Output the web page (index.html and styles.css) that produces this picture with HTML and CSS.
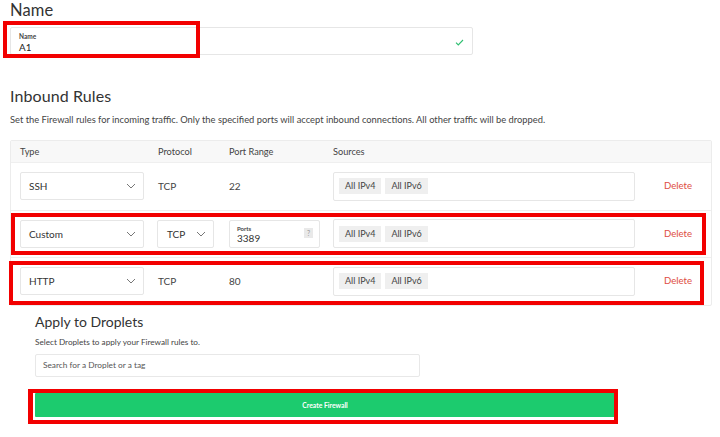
FILE: index.html
```html
<!DOCTYPE html>
<html>
<head>
<meta charset="utf-8">
<link rel="stylesheet" href="styles.css">
</head>
<body>
<div class="page">
  <h2 class="title">Name</h2>
  <div class="name-field">
    <div class="field-label">Name</div>
    <div class="field-value">A1</div>
    <svg class="check" width="9" height="7" viewBox="0 0 9 7"><path d="M1 3.6 L3.3 6 L8 1" fill="none" stroke="#2fbf71" stroke-width="1.1"/></svg>
    <div class="mark mark-name"></div>
  </div>

  <h2 class="title title-rules">Inbound Rules</h2>
  <p class="desc">Set the Firewall rules for incoming traffic. Only the specified ports will accept inbound connections. All other traffic will be dropped.</p>

  <div class="rules">
    <div class="row head">
      <div class="c1">Type</div>
      <div class="c2">Protocol</div>
      <div class="c3">Port Range</div>
      <div class="c4">Sources</div>
      <div class="c5"></div>
    </div>
    <div class="row">
      <div class="c1"><div class="select wide"><span>SSH</span><svg class="chev" width="10" height="6" viewBox="0 0 10 6"><path d="M1 1 L5 5 L9 1" fill="none" stroke="#777" stroke-width="1"/></svg></div></div>
      <div class="c2 txt">TCP</div>
      <div class="c3 txt">22</div>
      <div class="c4"><div class="sources"><span class="chip">All IPv4</span><span class="chip">All IPv6</span></div></div>
      <div class="c5"><span class="del">Delete</span></div>
    </div>
    <div class="row">
      <div class="c1"><div class="select wide"><span>Custom</span><svg class="chev" width="10" height="6" viewBox="0 0 10 6"><path d="M1 1 L5 5 L9 1" fill="none" stroke="#777" stroke-width="1"/></svg></div></div>
      <div class="c2"><div class="select narrow"><span>TCP</span><svg class="chev" width="10" height="6" viewBox="0 0 10 6"><path d="M1 1 L5 5 L9 1" fill="none" stroke="#777" stroke-width="1"/></svg></div></div>
      <div class="c3"><div class="ports"><div class="ports-text"><div class="field-label">Ports</div><div class="ports-value">3389</div></div><span class="help">?</span></div></div>
      <div class="c4"><div class="sources"><span class="chip">All IPv4</span><span class="chip">All IPv6</span></div></div>
      <div class="c5"><span class="del">Delete</span></div>
      <div class="mark mark-row2"></div>
    </div>
    <div class="row">
      <div class="c1"><div class="select wide"><span>HTTP</span><svg class="chev" width="10" height="6" viewBox="0 0 10 6"><path d="M1 1 L5 5 L9 1" fill="none" stroke="#777" stroke-width="1"/></svg></div></div>
      <div class="c2 txt">TCP</div>
      <div class="c3 txt">80</div>
      <div class="c4"><div class="sources"><span class="chip">All IPv4</span><span class="chip">All IPv6</span></div></div>
      <div class="c5"><span class="del">Delete</span></div>
      <div class="mark mark-row3"></div>
    </div>
  </div>

  <div class="apply">
    <h3 class="apply-title">Apply to Droplets</h3>
    <p class="apply-desc">Select Droplets to apply your Firewall rules to.</p>
    <div class="search">Search for a Droplet or a tag</div>
    <div class="btn-wrap">
      <div class="btn">Create Firewall</div>
      <div class="mark mark-btn"></div>
    </div>
  </div>
</div>
</body>
</html>
```
FILE: styles.css
```css
* { box-sizing: border-box; }
html, body { margin: 0; padding: 0; background: #fff; }
body { font-family: Lato, "Open Sans", sans-serif; color: #333; width: 720px; height: 437px; overflow: hidden; }
.page { padding: 0 0 0 10px; }

.title { font-weight: 400; font-size: 16.5px; line-height: 20px; margin: 0; color: #333; letter-spacing: 0.1px; }
.title-rules { margin-top: 31px; font-size: 16px; }

.name-field { position: relative; width: 463px; height: 28px; margin-top: 7px; border: 1px solid #e6e6e6; border-radius: 2px; padding: 5px 0 0 8px; }
.field-label { font-size: 6.5px; font-weight: 700; color: #444; line-height: 8px; }
.field-value { font-size: 9.8px; color: #222; line-height: 12px; }
.check { position: absolute; right: 8px; top: 11px; }

.mark { position: absolute; border: 4px solid #f20000; pointer-events: none; }
.mark-name { left: -8px; top: -7px; width: 197px; height: 37px; }

.desc { font-size: 9.35px; color: #444; margin: 8px 0 0; line-height: 12px; }

.rules { width: 702px; margin-top: 14px; border: 1px solid #ececec; border-radius: 2px; }
.row { position: relative; display: flex; align-items: center; height: 47.5px; border-top: 1px solid #efefef; }
.row.head { height: 21px; border-top: 0; background: #f8f8f8; font-size: 9.2px; color: #444; }
.c1 { width: 147px; padding-left: 9px; }
.c2 { width: 71px; }
.c3 { width: 104px; }
.c4 { width: 302px; }
.c5 { flex: 1; padding-left: 30px; display: flex; align-items: center; }
.txt { font-size: 10px; color: #444; }

.select { display: flex; align-items: center; justify-content: space-between; height: 28px; border: 1px solid #e6e6e6; border-radius: 2px; padding: 0 7px 0 8px; font-size: 10px; color: #333; }
.select.wide { width: 124px; }
.select.narrow { width: 57px; margin-left: -1px; padding-left: 9px; }

.ports { display: flex; align-items: center; justify-content: space-between; width: 91px; height: 28px; border: 1px solid #e6e6e6; border-radius: 2px; padding: 0 6px 0 7px; }
.ports-text { padding-top: 1px; }
.ports .field-label { font-size: 6px; line-height: 7px; }
.ports-value { font-size: 10px; color: #333; line-height: 12px; }
.help { display: inline-block; width: 9px; height: 10px; background: #e9e9e9; color: #999; font-size: 7px; line-height: 10px; text-align: center; margin-top: -1px; }

.sources { display: flex; align-items: center; gap: 4px; width: 302px; height: 29px; border: 1px solid #e6e6e6; border-radius: 2px; padding-left: 5px; }
.chip { background: #efefef; font-size: 9px; color: #444; padding: 0 6px; height: 16px; line-height: 16px; }

.del { color: #de4d44; font-size: 9.6px; line-height: 12px; margin-left: -1px; }

.mark-row2 { left: 0px; top: 2px; width: 695px; height: 42px; }
.mark-row3 { left: -2px; top: 3px; width: 695px; height: 44px; }

.apply { padding-left: 25px; margin-top: 7px; }
.apply-title { font-weight: 400; font-size: 14px; line-height: 18px; margin: 0; color: #333; }
.apply-desc { font-size: 8.2px; color: #444; margin: 6px 0 0; line-height: 10px; }
.search { width: 385px; height: 23px; margin-top: 7px; border: 1px solid #e8e8e8; border-radius: 2px; padding-left: 7px; font-size: 8.3px; line-height: 21px; color: #555; }
.btn-wrap { position: relative; width: 580px; margin-top: 16px; }
.btn { height: 24px; background: #1ccb6e; color: #fff; font-weight: 700; font-size: 6.8px; line-height: 24px; text-align: center; border-radius: 1px; }
.mark-btn { left: -7px; top: -4px; width: 590px; height: 35px; border-width: 4px 4px 4px 5px; }
```
